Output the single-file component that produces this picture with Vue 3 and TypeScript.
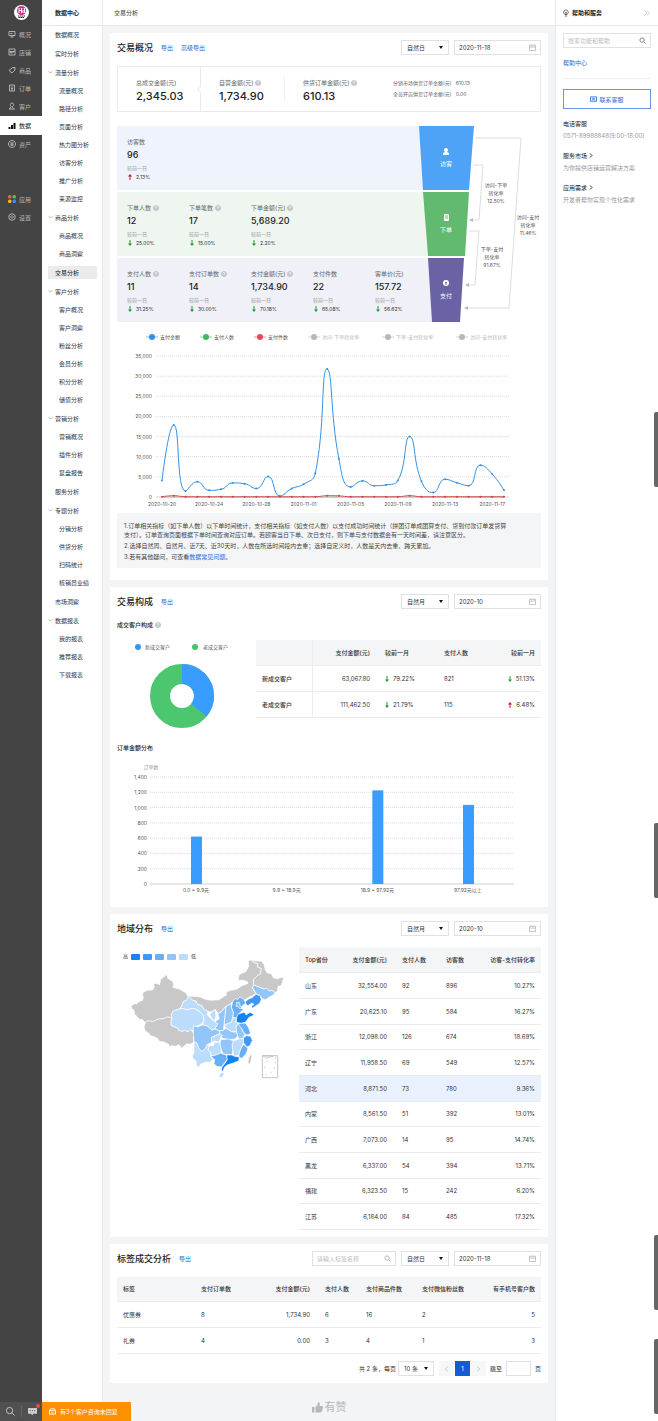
<script setup lang="ts">
import { ref } from 'vue'

interface RailItem { label: string; icon: string; active?: boolean }
interface MenuItem { label: string; kind: 'plain' | 'group' | 'child'; active?: boolean }
interface Metric { label: string; value: string; change: string; up?: boolean; help?: boolean }
interface Point { x: number; y: number }

const rail: RailItem[] = [
  { label: '概况', icon: 'M2 3h12v8H2z M8 11v3 M5 14h6 M5 7h4' },
  { label: '店铺', icon: 'M2 2h12v12H2z M2 7h12 M5 7v3h3V7 M10 7v3' },
  { label: '商品', icon: 'M2 9l7-6h5v5l-6 6z M11 5v1' },
  { label: '订单', icon: 'M3 2h10v12H3z M6 6h4 M6 9h4 M6 12h4' },
  { label: '客户', icon: 'M8 2c4 0 4 6 1 7v2l4 3H2l4-3V9C4 7 4 2 8 2z' },
  { label: '数据', icon: 'M3 10v4 M8 6v8 M13 2v12', active: true },
  { label: '资产', icon: 'M8 1a7 7 0 1 0 .1 0z M5 4l3 3 3-3 M8 7v5 M5 8h6 M5 10h6' },
]

const menu: MenuItem[] = [
  { label: '数据概况', kind: 'plain' },
  { label: '实时分析', kind: 'plain' },
  { label: '流量分析', kind: 'group' },
  { label: '流量概况', kind: 'child' },
  { label: '路径分析', kind: 'child' },
  { label: '页面分析', kind: 'child' },
  { label: '热力图分析', kind: 'child' },
  { label: '访客分析', kind: 'child' },
  { label: '推广分析', kind: 'child' },
  { label: '来源监控', kind: 'child' },
  { label: '商品分析', kind: 'group' },
  { label: '商品概况', kind: 'child' },
  { label: '商品洞察', kind: 'child' },
  { label: '交易分析', kind: 'plain', active: true },
  { label: '客户分析', kind: 'group' },
  { label: '客户概况', kind: 'child' },
  { label: '客户洞察', kind: 'child' },
  { label: '粉丝分析', kind: 'child' },
  { label: '会员分析', kind: 'child' },
  { label: '积分分析', kind: 'child' },
  { label: '储值分析', kind: 'child' },
  { label: '营销分析', kind: 'group' },
  { label: '营销概况', kind: 'child' },
  { label: '插件分析', kind: 'child' },
  { label: '复盘报告', kind: 'child' },
  { label: '服务分析', kind: 'plain' },
  { label: '专题分析', kind: 'group' },
  { label: '分销分析', kind: 'child' },
  { label: '供货分析', kind: 'child' },
  { label: '扫码统计', kind: 'child' },
  { label: '核销员业绩', kind: 'child' },
  { label: '市场洞察', kind: 'plain' },
  { label: '数据报表', kind: 'group' },
  { label: '我的报表', kind: 'child' },
  { label: '推荐报表', kind: 'child' },
  { label: '下载报表', kind: 'child' },
]

const stages: { name: string; metrics: Metric[] }[] = [
  { name: 'visit', metrics: [{ label: '访客数', value: '96', change: '2.13%', up: true }] },
  {
    name: 'order',
    metrics: [
      { label: '下单人数', value: '12', change: '25.00%', help: true },
      { label: '下单笔数', value: '17', change: '15.00%', help: true },
      { label: '下单金额(元)', value: '5,689.20', change: '2.20%', help: true },
    ],
  },
  {
    name: 'pay',
    metrics: [
      { label: '支付人数', value: '11', change: '31.25%', help: true },
      { label: '支付订单数', value: '14', change: '30.00%', help: true },
      { label: '支付金额(元)', value: '1,734.90', change: '70.18%', help: true },
      { label: '支付件数', value: '22', change: '65.08%' },
      { label: '客单价(元)', value: '157.72', change: '56.62%' },
    ],
  },
]

const legend = [
  { label: '支付金额', x: 35, color: '#2f8fe8' },
  { label: '支付人数', x: 89, color: '#3fba63' },
  { label: '支付件数', x: 143, color: '#e8475c' },
  { label: '访问-下单转化率', x: 197, color: '#b8b8b8', off: true },
  { label: '下单-支付转化率', x: 271, color: '#b8b8b8', off: true },
  { label: '访问-支付转化率', x: 345, color: '#b8b8b8', off: true },
]

const amounts = [
  4100, 17900, 1500, 3800, 1650, 1900, 3500, 3300, 2100, 5100, 250, 2100, 3150, 5900, 31800,
  9500, 2500, 4000, 2800, 3000, 4100, 15000, 3900, 1100, 4400, 3550, 2800, 7900, 5700, 1650,
]
const counts = amounts.map((a) => (a > 12000 ? 330 : a > 9000 ? 280 : 60))
const toPoints = (values: number[]): Point[] =>
  values.map((v, i) => ({ x: 45 + (i * 342) / 29, y: 175 - (v * 141) / 35000 }))

const between = (v: number, a: number, b: number) => Math.max(Math.min(a, b), Math.min(Math.max(a, b), v))

function smoothPath(p: Point[]): string {
  let d = `M${p[0].x},${p[0].y}`
  let out: Point = p[0]
  for (let i = 1; i < p.length; i++) {
    const prev = p[i - 1]
    const cur = p[i]
    const next = p[i + 1]
    let back: Point = cur
    let forward: Point = cur
    if (next) {
      const vx = next.x - prev.x
      const vy = next.y - prev.y
      const lp = Math.hypot(cur.x - prev.x, cur.y - prev.y)
      const ln = Math.hypot(cur.x - next.x, cur.y - next.y)
      const r = ln / (ln + lp)
      const fx = between(cur.x + vx * 0.5 * r, cur.x, next.x)
      const fy = between(cur.y + vy * 0.5 * r, cur.y, next.y)
      const bx = between(cur.x - ((fx - cur.x) * lp) / ln, prev.x, cur.x)
      const by = between(cur.y - ((fy - cur.y) * lp) / ln, prev.y, cur.y)
      back = { x: bx, y: by }
      forward = { x: cur.x + ((cur.x - bx) * ln) / lp, y: cur.y + ((cur.y - by) * ln) / lp }
    }
    d += `C${out.x},${out.y} ${back.x},${back.y} ${cur.x},${cur.y}`
    out = forward
  }
  return d
}

const amountPoints = toPoints(amounts)
const countPoints = toPoints(counts)
const amountPath = smoothPath(amountPoints)
const countPath = smoothPath(countPoints)
const yTicks = [35000, 30000, 25000, 20000, 15000, 10000, 5000, 0]
const dates = ['2020-10-20', '2020-10-24', '2020-10-28', '2020-11-01', '2020-11-05', '2020-11-09', '2020-11-13', '2020-11-17']

const bars = [
  { label: '0.0 ~ 9.9元', value: 620 },
  { label: '9.9 ~ 18.9元', value: 0 },
  { label: '18.9 ~ 97.92元', value: 1225 },
  { label: '97.92元以上', value: 1035 },
]
const barTicks = [1400, 1200, 1000, 800, 600, 400, 200, 0]

const regions = [
  ['山东', '32,554.00', '92', '896', '10.27%'],
  ['广东', '20,625.10', '95', '584', '16.27%'],
  ['浙江', '12,098.00', '126', '674', '18.69%'],
  ['辽宁', '11,958.50', '69', '549', '12.57%'],
  ['河北', '8,871.50', '73', '780', '9.36%'],
  ['内蒙', '8,561.50', '51', '392', '13.01%'],
  ['广西', '7,073.00', '14', '95', '14.74%'],
  ['黑龙', '6,337.00', '54', '394', '13.71%'],
  ['福建', '6,323.50', '15', '242', '6.20%'],
  ['江苏', '6,184.00', '84', '485', '17.32%'],
]

const tags = [
  ['优惠券', '8', '1,734.90', '6', '16', '2', '5'],
  ['礼券', '4', '0.00', '3', '4', '1', '3'],
]

const scale = ['#1583f2', '#3f98f5', '#69aff8', '#92c5fa', '#bcdcfc']
const gray = '#c8c8c8'
const provinces: { name: string; fill: string; d: string }[] = [
  { name: 'xinjiang', fill: gray, d: 'M34,196L44,190L50,191L56,184L68,180L70,170L67,164L70,156L82,150L98,149L103,140L100,131L108,129L119,133L122,116L132,110L137,103L142,107L143,114L157,122L162,134L158,141L180,147L198,158L205,170L200,180L190,184L186,196L178,206L160,212L154,222L156,232L142,230L130,235L112,237L100,243L82,242L76,247L68,238L58,237L52,230L44,222L42,210L34,204Z' },
  { name: 'xizang', fill: gray, d: 'M76,247L82,242L100,243L112,237L130,235L142,230L156,232L153,244L154,256L172,262L176,270L186,273L194,270L205,274L212,268L222,280L220,294L222,306L210,312L200,310L194,316L184,324L180,316L174,313L168,318L152,316L148,322L146,312L130,304L120,304L110,292L92,286L88,280L76,272L72,262Z' },
  { name: 'neimenggu', fill: gray, d: 'M205,170L212,167L240,170L256,177L272,180L298,178L312,168L320,164L318,156L332,150L350,147L366,136L384,129L382,124L370,120L354,120L357,104L366,98L378,94L386,78L385,62L394,58L400,66L414,70L412,80L424,84L422,100L412,106L400,118L402,134L396,142L408,160L396,166L384,172L372,180L360,174L350,178L338,184L330,192L318,198L306,212L296,220L286,208L276,214L262,214L252,208L246,196L232,192L228,182L218,180Z' },
  { name: 'heilongjiang', fill: gray, d: 'M394,58L404,62L414,62L424,63L432,72L436,90L442,98L454,100L460,112L472,116L480,112L491,111L487,126L484,136L474,138L472,152L466,158L456,150L448,152L440,144L430,146L412,138L402,134L400,118L412,106L422,100L424,84L412,80L414,70L400,66Z' },
  { name: 'gansu', fill: scale[4], d: 'M205,170L208,168L218,180L228,182L232,192L246,196L252,208L264,212L262,224L272,234L284,244L294,250L286,264L276,270L268,262L260,256L248,254L252,240L250,226L240,214L222,204L200,208L186,204L178,206L186,196L190,184L200,180Z' },
  { name: 'qinghai', fill: scale[4], d: 'M160,212L178,206L186,204L200,208L222,204L240,214L250,226L252,240L244,252L232,256L222,262L218,272L212,268L205,274L194,270L186,273L176,270L172,262L154,256L153,244L156,232L154,222Z' },
  { name: 'ningxia', fill: scale[4], d: 'M276,214L286,208L288,226L284,242L274,232L270,222Z' },
  { name: 'jilin', fill: scale[3], d: 'M402,134L412,138L430,146L440,144L448,152L456,150L466,158L456,166L448,170L436,178L428,176L420,166L408,160L398,142Z' },
  { name: 'liaoning', fill: scale[1], d: 'M376,184L386,176L396,172L408,162L420,166L424,178L418,190L408,196L398,204L394,198L402,192L396,188L384,196L378,192Z' },
  { name: 'hebei', fill: scale[2], d: 'M338,184L346,174L352,178L360,170L370,176L378,188L370,194L362,202L370,208L358,218L352,232L338,232L340,216L334,202Z' },
  { name: 'beijing', fill: scale[3], d: 'M350,186L358,186L360,196L366,200L360,206L354,198L348,198Z' },
  { name: 'shandong', fill: scale[0], d: 'M348,236L354,222L364,218L374,216L378,224L390,216L402,222L396,228L388,230L376,246L364,249L350,246Z' },
  { name: 'shanxi', fill: scale[3], d: 'M318,198L334,190L334,202L340,216L338,232L334,246L312,254L314,232Z' },
  { name: 'shaanxi', fill: scale[3], d: 'M294,222L306,212L318,198L314,232L312,254L310,270L298,272L284,266L294,250L284,244L298,236Z' },
  { name: 'henan', fill: scale[4], d: 'M312,254L334,246L338,232L350,234L346,244L354,250L348,260L352,274L334,274L318,264Z' },
  { name: 'sichuan', fill: scale[3], d: 'M220,256L232,260L248,254L260,256L268,262L276,270L284,266L298,272L300,280L286,286L274,292L276,306L262,312L256,324L246,334L236,324L230,308L222,304L220,280Z' },
  { name: 'chongqing', fill: scale[4], d: 'M286,286L300,280L308,286L300,294L298,306L284,302L276,306L274,292Z' },
  { name: 'hubei', fill: scale[3], d: 'M298,272L310,270L318,264L334,274L350,276L354,288L344,296L326,298L310,294L302,290L308,286L300,280Z' },
  { name: 'anhui', fill: scale[3], d: 'M354,250L364,258L366,268L374,282L370,292L358,296L354,288L350,276L348,260Z' },
  { name: 'jiangsu', fill: scale[2], d: 'M354,250L364,249L376,248L386,262L392,280L380,284L372,278L366,266Z' },
  { name: 'zhejiang', fill: scale[1], d: 'M370,292L380,286L392,288L397,300L390,316L380,320L370,306Z' },
  { name: 'fujian', fill: scale[2], d: 'M370,312L380,320L384,326L378,340L366,354L358,352L356,340L362,326Z' },
  { name: 'jiangxi', fill: scale[4], d: 'M340,302L356,296L370,294L370,310L362,326L356,344L342,348L338,330L336,314Z' },
  { name: 'hunan', fill: scale[3], d: 'M302,298L326,296L340,302L336,314L338,330L336,344L322,342L310,342L304,328L300,314Z' },
  { name: 'guizhou', fill: scale[4], d: 'M268,316L280,316L284,306L298,306L300,314L304,328L302,338L288,344L274,346L272,336L264,328Z' },
  { name: 'yunnan', fill: scale[4], d: 'M222,306L230,308L236,324L246,334L256,324L262,314L268,316L264,328L272,336L272,350L280,356L270,366L256,366L244,370L236,380L230,378L228,362L216,350L222,336Z' },
  { name: 'guangxi', fill: scale[2], d: 'M272,348L288,344L302,338L310,342L320,344L322,356L312,370L304,380L290,378L282,370L284,358Z' },
  { name: 'guangdong', fill: scale[0], d: 'M320,344L336,344L344,348L358,350L356,362L340,368L322,374L314,380L308,394L304,390L306,380L314,370L322,358Z' },
  { name: 'hainan', fill: scale[4], d: 'M297,404L306,396L313,398L308,410L300,413Z' },
  { name: 'taiwan', fill: gray, d: 'M392,343L396,346L393,362L388,374L384,366L386,352Z' },
]

const helpIcon = 'M4 0a4 4 0 1 0 .01 0z'
const thumbs = ['one', 'two', 'three', 'four']
const periodDay = ref('自然日')
const periodMonth = ref('自然月')
const periodRegion = ref('自然月')
const periodTag = ref('自然日')
const pageSize = ref('10 条')
const fmt = (n: number) => n.toLocaleString('en-US')
</script>

<template>
  <div class="page">
    <nav class="rail" aria-label="主导航">
      <div class="logo">
        <svg viewBox="0 0 30 30" aria-hidden="true">
          <circle cx="15" cy="15" r="15" fill="#fff" />
          <circle cx="15" cy="11" r="9" fill="#d8288c" />
          <path d="M10 6v10M10 11h5M15 6v10M18 10v6M18 6v1M21 6v10" stroke="#fff" stroke-width="2" fill="none" />
          <path d="M8 22h14M9 25h12" stroke="#222" stroke-width="2" stroke-dasharray="3 1" />
        </svg>
      </div>
      <a v-for="item in rail" :key="item.label" href="#" class="rail-item" :class="{ active: item.active }">
        <svg viewBox="0 0 16 16" aria-hidden="true"><path :d="item.icon" /></svg>
        <span>{{ item.label }}</span>
      </a>
      <a href="#" class="rail-item apps">
        <svg viewBox="0 0 16 16" aria-hidden="true">
          <rect x="0" y="0" width="7" height="7" rx="3" fill="#f05b4f" />
          <rect x="9" y="0" width="7" height="7" rx="3" fill="#4fc15b" />
          <rect x="0" y="9" width="7" height="7" rx="3" fill="#f7b52c" />
          <rect x="9" y="9" width="7" height="7" rx="3" fill="#3f8ef5" />
        </svg>
        <span>应用</span>
      </a>
      <a href="#" class="rail-item">
        <svg viewBox="0 0 16 16" aria-hidden="true"><path d="M8 1l6 3.500v7L8 15l-6-3.500v-7z M8 5.500a2.500 2.500 0 1 0 .1 0z" /></svg>
        <span>设置</span>
      </a>
      <div class="rail-foot">
        <button type="button" aria-label="搜索">
          <svg viewBox="0 0 20 20"><circle cx="8" cy="8" r="7" /><path d="M13 13l6 6" /></svg>
        </button>
        <button type="button" class="chat" aria-label="消息">
          <svg viewBox="0 0 20 20">
            <path class="solid" d="M0 2h20v13h-8l-3 4-2-4H0z" />
            <path class="dots" d="M4 8h2M9 8h2M14 8h2" />
          </svg>
        </button>
      </div>
    </nav>

    <aside class="submenu">
      <h1 class="bar strong">数据中心</h1>
      <ul>
        <li v-for="item in menu" :key="item.label" :class="[item.kind, { active: item.active }]">
          <a href="#">
            <svg v-if="item.kind === 'group'" viewBox="0 0 8 8" aria-hidden="true"><path d="M1 2l3 3 3-3" /></svg>
            <span>{{ item.label }}</span>
          </a>
        </li>
      </ul>
    </aside>

    <main>
      <div class="bar crumb">交易分析</div>
      <div class="cards">
        <section class="card overview">
          <header>
            <h2>交易概况</h2>
            <a href="#">导出</a>
            <a href="#">高级导出</a>
            <div class="controls">
              <span class="select"><select v-model="periodDay" aria-label="周期"><option>自然日</option><option>自然月</option></select></span>
              <label class="field date"><input type="text" value="2020-11-18" aria-label="日期" /><svg viewBox="0 0 16 16"><path d="M1 3h14v12H1zM1 7h14M4 1v2M12 1v2" /></svg></label>
            </div>
          </header>

          <div class="summary">
            <div class="total"><p>总成交金额(元)</p><strong>2,345.03</strong></div>
            <div class="part self">
              <p>自营金额(元)<svg class="help" viewBox="0 0 8 8"><path :d="helpIcon" /><path class="q" d="M3 3c0-2 2-1 2 0L4 4.500M4 6v.4" /></svg></p>
              <strong>1,734.90</strong>
            </div>
            <div class="part supply">
              <p>供货订单金额(元)<svg class="help" viewBox="0 0 8 8"><path :d="helpIcon" /><path class="q" d="M3 3c0-2 2-1 2 0L4 4.500M4 6v.4" /></svg></p>
              <strong>610.13</strong>
            </div>
            <div class="detail">
              <p>分销市场供货订单金额(元)<span>610.13</span></p>
              <p>全员开店供货订单金额(元)<span>0.00</span></p>
            </div>
          </div>

          <div class="funnel">
            <div class="stages">
              <div v-for="s in stages" :key="s.name" class="stage" :class="s.name">
                <div v-for="m in s.metrics" :key="m.label" class="metric">
                  <p class="name">{{ m.label }}<svg v-if="m.help" class="help" viewBox="0 0 8 8"><path :d="helpIcon" /><path class="q" d="M3 3c0-2 2-1 2 0L4 4.500M4 6v.4" /></svg></p>
                  <strong>{{ m.value }}</strong>
                  <p class="vs">较前一日</p>
                  <p class="change">
                    <svg class="arrow" :class="{ up: m.up }" viewBox="0 0 8 12"><path d="M4 12L0 7h3V0h2v7h3z" /></svg>{{ m.change }}
                  </p>
                </div>
              </div>
            </div>
            <svg class="shape" viewBox="0 0 123 196" role="img" aria-label="转化漏斗">
              <polygon points="0,0 2,0 6,64 0,64" fill="#eff4fc" />
              <polygon points="0,66 6,66 11,130 0,130" fill="#eef6ef" />
              <polygon points="0,132 11,132 15,196 0,196" fill="#eff0f8" />
              <polygon points="1,0 56,0 51,64 5,64" fill="#4fa3f7" />
              <polygon points="5,66 51,66 47,130 10,130" fill="#62ba70" />
              <polygon points="10,132 46,132 42,196 14,196" fill="#6963a5" />
              <g fill="#fff">
                <circle cx="28" cy="24" r="2" /><path d="M27 25h2v1l2 1v2h-6v-2l2-1z" />
                <rect x="26" y="88" width="5" height="7" rx="1" />
                <circle cx="28" cy="157" r="3" />
              </g>
              <path d="M27 90h3M27 92h3" stroke="#62ba70" fill="none" />
              <path d="M27 156l1 1 1-1M28 157v2" stroke="#6963a5" fill="none" />
              <g class="tier"><text x="28" y="40">访客</text><text x="28" y="106">下单</text><text x="28" y="172">支付</text></g>
              <g fill="none" stroke="#ddd">
                <path d="M57 12h46l-12 170H48" /><path d="M55 39h10l-4 55H53" /><path d="M51 105h10l-4 54H49" />
              </g>
              <path d="M46 182l4-2v4zM51 94l4-2v4zM47 159l4-2v4z" fill="#bbb" />
              <g class="rate">
                <text x="78" y="61">访问-下单</text><text x="78" y="69">转化率</text><text x="78" y="77">12.50%</text>
                <text x="110" y="93">访问-支付</text><text x="110" y="101">转化率</text><text x="110" y="109">11.46%</text>
                <text x="74" y="125">下单-支付</text><text x="74" y="133">转化率</text><text x="74" y="141">91.67%</text>
              </g>
            </svg>
          </div>

          <svg class="chart" viewBox="0 0 424 191" role="img" aria-label="支付趋势">
            <g v-for="l in legend" :key="l.label">
              <path :d="`M${l.x - 6} 15h12`" :stroke="l.color" stroke-opacity=".6" />
              <circle :cx="l.x" cy="15" r="3" :fill="l.color" />
              <text :x="l.x + 8" y="17" :class="{ off: l.off }">{{ l.label }}</text>
            </g>
            <g v-for="(t, i) in yTicks" :key="t">
              <line x1="39" x2="392" :y1="34 + (i * 141) / 7" :y2="34 + (i * 141) / 7" :class="t ? 'grid' : 'base'" />
              <text class="end" x="35" :y="36 + (i * 141) / 7">{{ fmt(t) }}</text>
            </g>
            <text v-for="(d, i) in dates" :key="d" class="mid" :x="45 + (i * 342 * 4) / 29" y="184">{{ d }}</text>
            <path :d="amountPath" class="line" stroke="#3391e6" />
            <circle v-for="(p, i) in amountPoints" :key="i" :cx="p.x" :cy="p.y" r="1" fill="#3391e6" />
            <path d="M45 175H387" stroke="#8bc79a" />
            <path :d="countPath" class="line" stroke="#dc4c5c" />
            <circle v-for="(p, i) in countPoints" :key="i" :cx="p.x" :cy="p.y" r="1" fill="#d33d50" />
          </svg>

          <div class="notes">
            <p>1.订单相关指标（如下单人数）以下单时间统计，支付相关指标（如支付人数）以支付成功时间统计（拼团订单成团算支付、货到付款订单发货算<br />支付）。订单查询页面根据下单时间查询对应订单。若顾客当日下单、次日支付，则下单与支付数据会有一天时间差，请注意区分。</p>
            <p>2.选择自然周、自然月、近7天、近30天时，人数在所选时间段内去重；选择自定义时，人数是天内去重、跨天累加。</p>
            <p>3.若有其他疑问，可查看<a href="#">数据常见问题</a>。</p>
          </div>
        </section>

        <section class="card compose">
          <header>
            <h2>交易构成</h2>
            <a href="#">导出</a>
            <div class="controls">
              <span class="select"><select v-model="periodMonth" aria-label="周期"><option>自然日</option><option>自然月</option></select></span>
              <label class="field date"><input type="text" value="2020-10" aria-label="月份" /><svg viewBox="0 0 16 16"><path d="M1 3h14v12H1zM1 7h14M4 1v2M12 1v2" /></svg></label>
            </div>
          </header>
          <h3>成交客户构成<svg class="help" viewBox="0 0 8 8"><path :d="helpIcon" /><path class="q" d="M3 3c0-2 2-1 2 0L4 4.500M4 6v.4" /></svg></h3>
          <div class="split">
            <svg class="donut" viewBox="0 0 139 98" role="img" aria-label="新老客户占比">
              <circle cx="21" cy="7" r="3" fill="#3496fa" /><text x="28" y="9">新成交客户</text>
              <circle cx="78" cy="7" r="3" fill="#45c468" /><text x="86" y="9">老成交客户</text>
              <circle cx="65" cy="56" r="22" fill="none" stroke="#4cc76f" stroke-width="20" />
              <circle cx="65" cy="56" r="22" fill="none" stroke="#389dff" stroke-width="20" pathLength="1000" stroke-dasharray="361 639" transform="rotate(-90 65 56)" />
            </svg>
            <table class="compare">
              <colgroup><col class="c1" /><col class="c2" /><col class="c3" /><col class="c4" /><col /></colgroup>
              <thead><tr><th></th><th class="num">支付金额(元)</th><th class="shift">较前一月</th><th>支付人数</th><th class="num">较前一月</th></tr></thead>
              <tbody>
                <tr>
                  <th scope="row">新成交客户</th><td class="num">63,067.80</td>
                  <td class="shift"><svg class="arrow" viewBox="0 0 8 12"><path d="M4 12L0 7h3V0h2v7h3z" /></svg>79.22%</td><td>821</td>
                  <td class="num"><svg class="arrow" viewBox="0 0 8 12"><path d="M4 12L0 7h3V0h2v7h3z" /></svg>51.13%</td>
                </tr>
                <tr>
                  <th scope="row">老成交客户</th><td class="num">111,462.50</td>
                  <td class="shift"><svg class="arrow" viewBox="0 0 8 12"><path d="M4 12L0 7h3V0h2v7h3z" /></svg>21.79%</td><td>115</td>
                  <td class="num"><svg class="arrow up" viewBox="0 0 8 12"><path d="M4 12L0 7h3V0h2v7h3z" /></svg>6.48%</td>
                </tr>
              </tbody>
            </table>
          </div>
          <h3 class="second">订单金额分布</h3>
          <svg class="chart" viewBox="0 0 424 148" role="img" aria-label="订单金额分布">
            <text class="mid soft" x="34" y="18">订单数</text>
            <g v-for="(t, i) in barTicks" :key="t">
              <line x1="33" x2="397" :y1="26 + (i * 107) / 7" :y2="26 + (i * 107) / 7" :class="t ? 'grid' : 'base'" />
              <text class="end" x="30" :y="28 + (i * 107) / 7">{{ fmt(t) }}</text>
            </g>
            <g v-for="(b, i) in bars" :key="b.label">
              <rect :x="74 + (i * 272) / 3" :y="133 - (b.value * 107) / 1400" width="11" :height="(b.value * 107) / 1400" fill="#389dff" />
              <text class="mid" :x="79 + (i * 272) / 3" y="141">{{ b.label }}</text>
            </g>
          </svg>
        </section>

        <section class="card region">
          <header>
            <h2>地域分布</h2>
            <a href="#">导出</a>
            <div class="controls">
              <span class="select"><select v-model="periodRegion" aria-label="周期"><option>自然日</option><option>自然月</option></select></span>
              <label class="field date"><input type="text" value="2020-10" aria-label="月份" /><svg viewBox="0 0 16 16"><path d="M1 3h14v12H1zM1 7h14M4 1v2M12 1v2" /></svg></label>
            </div>
          </header>
          <div class="split">
            <div class="geo">
              <div class="heat"><span>高</span><i v-for="(c, i) in scale" :key="c" :class="'s' + i"></i><span>低</span></div>
              <svg class="map" viewBox="0 50 540 370" role="img" aria-label="地域分布图">
                <path v-for="p in provinces" :key="p.name" :d="p.d" :fill="p.fill" />
                <path class="inset" d="M427 346h46v66h-46z" />
                <path class="isle" d="M430 347l8 7 10-3 12-3zM466 350v6M466 364v6M464 380l-2 6M456 394l-5 5M442 402l-5 2M434 384v-5M440 366l2-5" />
              </svg>
            </div>
            <table class="top">
              <colgroup><col class="c1" /><col class="c2" /><col class="c3" /><col class="c4" /><col /></colgroup>
              <thead><tr><th>Top省份</th><th class="num">支付金额(元)</th><th class="shift">支付人数</th><th>访客数</th><th class="num">访客-支付转化率</th></tr></thead>
              <tbody>
                <tr v-for="(r, i) in regions" :key="r[0]" :class="{ hover: i === 4 }">
                  <td>{{ r[0] }}</td><td class="num">{{ r[1] }}</td><td class="shift">{{ r[2] }}</td><td>{{ r[3] }}</td><td class="num">{{ r[4] }}</td>
                </tr>
              </tbody>
            </table>
          </div>
        </section>

        <section class="card tagcard">
          <header>
            <h2>标签成交分析</h2>
            <a href="#">导出</a>
            <div class="controls">
              <label class="field search"><input type="text" placeholder="请输入标签名称" aria-label="标签名称" /><svg viewBox="0 0 16 16"><circle cx="7" cy="7" r="5" /><path d="M11 11l4 4" /></svg></label>
              <span class="select"><select v-model="periodTag" aria-label="周期"><option>自然日</option><option>自然月</option></select></span>
              <label class="field date"><input type="text" value="2020-11-18" aria-label="日期" /><svg viewBox="0 0 16 16"><path d="M1 3h14v12H1zM1 7h14M4 1v2M12 1v2" /></svg></label>
            </div>
          </header>
          <table class="tags">
            <colgroup><col class="c1" /><col class="c2" /><col class="c3" /><col class="c4" /><col class="c5" /><col class="c6" /></colgroup>
            <thead><tr><th>标签</th><th>支付订单数</th><th class="num">支付金额(元)</th><th class="shift">支付人数</th><th>支付商品件数</th><th>支付微信粉丝数</th><th class="num">有手机号客户数</th></tr></thead>
            <tbody>
              <tr v-for="t in tags" :key="t[0]">
                <td>{{ t[0] }}</td><td>{{ t[1] }}</td><td class="num">{{ t[2] }}</td><td class="shift">{{ t[3] }}</td><td>{{ t[4] }}</td><td>{{ t[5] }}</td><td class="num">{{ t[6] }}</td>
              </tr>
            </tbody>
          </table>
          <div class="pager">
            <span>共 2 条，每页</span>
            <span class="select small"><select v-model="pageSize" aria-label="每页条数"><option>10 条</option><option>20 条</option></select></span>
            <div class="pages">
              <button type="button" aria-label="上一页"><svg viewBox="0 0 8 8"><path d="M6 0L2 4l4 4" /></svg></button>
              <button type="button" class="current">1</button>
              <button type="button" aria-label="下一页"><svg viewBox="0 0 8 8"><path d="M2 0l4 4-4 4" /></svg></button>
            </div>
            <label>跳至<input type="text" aria-label="页码" />页</label>
          </div>
        </section>
      </div>
      <footer>
        <svg viewBox="0 0 22 22" aria-hidden="true"><path d="M0 10h5v11H0zM7 10l4-4 1-6c4 0 4 4 3 8h6c2 5-1 10-3 13H7z" /></svg>
        <span>有赞</span>
      </footer>
    </main>

    <aside class="support">
      <div class="bar">
        <svg viewBox="0 0 16 20" aria-hidden="true"><path d="M5 14C0 9 2 2 8 2s8 7 3 12zM5 18h6M8 14V8M6 7l2 2 2-2" /></svg>
        <strong>帮助和服务</strong>
        <button type="button" aria-label="收起"><svg viewBox="0 0 12 12"><path d="M1 1l5 5-5 5M6 1l5 5-5 5" /></svg></button>
      </div>
      <div class="support-body">
        <label class="field lookup"><input type="text" placeholder="搜索功能和帮助" aria-label="搜索功能和帮助" /><svg viewBox="0 0 16 16"><circle cx="7" cy="7" r="5" /><path d="M11 11l4 4" /></svg></label>
        <a class="center" href="#">帮助中心</a>
        <button type="button" class="contact"><svg viewBox="0 0 16 16"><path d="M1 2h14v10h-5l-2 2-2-2H1zM5 6h6M5 9h6" /></svg>联系客服</button>
        <dl>
          <dt>电话客服</dt><dd>0571-89988848(9:00-18:00)</dd>
          <dt>服务市场<svg viewBox="0 0 8 8"><path d="M2 0l4 4-4 4" /></svg></dt><dd>为你提供店铺运营解决方案</dd>
          <dt>应用需求<svg viewBox="0 0 8 8"><path d="M2 0l4 4-4 4" /></svg></dt><dd>开发者帮你实现个性化需求</dd>
        </dl>
      </div>
    </aside>

    <a href="#" class="toast">
      <svg viewBox="0 0 16 16" aria-hidden="true"><path d="M3 2h10l2 4v8H1V6zM1 6h14M5 10c2 2 4 2 6 0" /></svg>
      <span>有3个客户咨询未回复</span>
    </a>
    <i v-for="t in thumbs" :key="t" class="thumb" :class="t"></i>
  </div>
</template>

<style>
body { margin: 0; background: #f2f4f6; }
</style>

<style scoped>
.page {
  position: relative;
  display: grid;
  grid-template-columns: 42px 61px 1fr 103px;
  min-height: 100vh;
  font: 6px/9px Inter, "Noto Sans CJK SC", sans-serif;
  color: #333;
  overflow: hidden;
}
.page * { box-sizing: border-box; }
h1, h2, h3, p, ul, dl, dd { margin: 0; padding: 0; font-weight: 400; font-size: inherit; }
ul { list-style: none; }
a { color: #2d68d2; text-decoration: none; }
button, input, select { font: inherit; color: inherit; margin: 0; padding: 0; border: 0; background: none; border-radius: 0; outline: 0; }
svg { display: block; flex: none; fill: none; stroke-width: 1; }
svg text { fill: #555; stroke: none; font-size: 5px; }

.bar { height: 26px; display: flex; align-items: center; border-bottom: 1px solid #e6e8ea; background: #fff; }
.bar.strong { font-weight: 600; padding-left: 13px; color: #222; }

.rail { background: #444; display: flex; flex-direction: column; }
.logo { height: 25px; display: flex; justify-content: center; align-items: center; }
.logo svg { width: 15px; height: 15px; }
.rail-item { height: 18px; display: flex; align-items: center; gap: 3px; padding-left: 8px; color: #b8b8b8; }
.rail-item svg { width: 8px; height: 8px; }
.rail-item path { stroke: #b0b0b0; stroke-width: 2; }
.rail-item.active { height: 19px; background: #fff; color: #222; margin-top: 1px; }
.rail-item.active path { stroke: #111; stroke-width: 4; }
.rail-item.apps { margin-top: 37px; }
.rail-foot { margin-top: auto; height: 19px; background: #505050; display: flex; align-items: center; }
.rail-foot button { width: 21px; height: 11px; display: flex; justify-content: center; align-items: center; }
.rail-foot button.chat { border-left: 1px solid #666; position: relative; }
.rail-foot svg { width: 9px; height: 9px; stroke: #ccc; stroke-width: 2; }
.rail-foot .solid { fill: #ccc; stroke: none; }
.rail-foot .dots { stroke: #555; }
.chat::after { content: ""; position: absolute; right: 2px; top: -2px; width: 4px; height: 4px; border-radius: 2px; background: #ea4b46; }

.submenu { background: #fff; border-right: 1px solid #e9ebed; }
.submenu li { height: 18px; padding: 2px 5px 3px 6px; }
.submenu li.plain, .submenu li.group { margin-top: 1px; }
.submenu li:first-child { margin-top: 0; }
.submenu a { display: flex; align-items: center; height: 13px; padding-left: 7px; color: #333; }
.submenu .child a { padding-left: 11px; }
.submenu .group a { padding-left: 0; gap: 2px; }
.submenu li svg { width: 5px; height: 5px; stroke: #888; }
.submenu .active a { background: #ebebeb; color: #111; }

main { display: flex; flex-direction: column; background: #f2f4f6; min-width: 0; }
.crumb { padding-left: 11px; }
.cards { padding: 7px; display: flex; flex-direction: column; gap: 7px; }
.card { background: #fff; padding: 7px; }
.overview { padding-bottom: 12px; }
.compose { padding-bottom: 8px; }
header { display: flex; align-items: center; height: 15px; gap: 8px; }
header h2 { font-size: 9px; line-height: 13px; font-weight: 500; color: #222; }
.controls { margin-left: auto; display: flex; gap: 5px; }
.select { position: relative; display: block; width: 48px; height: 15px; border: 1px solid #dfe1e4; background: #fff; }
.select::after { content: ""; position: absolute; right: 5px; top: 5px; border: 2px solid transparent; border-top: 3px solid #111; border-bottom: 0; }
.select select { appearance: none; width: 100%; height: 100%; padding-left: 5px; display: block; }
.field { display: flex; align-items: center; height: 15px; border: 1px solid #dfe1e4; background: #fff; padding: 0 4px; }
.field input { flex: 1; min-width: 0; width: 0; height: 11px; }
.field input::placeholder { color: #bbb; opacity: 1; }
.field svg { width: 7px; height: 7px; stroke: #aaa; stroke-width: 2; }
.date { width: 87px; }
.date svg { stroke: #bbb; }
.search { width: 84px; }

.help { display: inline-block; width: 6px; height: 6px; margin-left: 2px; vertical-align: -1px; fill: #c3c5c8; }
.help .q { fill: none; stroke: #fff; }
.arrow { display: inline-block; width: 4px; height: 6px; margin-right: 4px; vertical-align: -1px; fill: #1f9a35; }
.arrow.up { fill: #c8142c; transform: rotate(180deg); }

.summary { margin-top: 11px; height: 46px; border: 1px solid #e8eaec; display: grid; grid-template-columns: 83px 84px 90px 1fr; align-items: center; color: #666; }
.summary strong { display: block; font-size: 11px; line-height: 16px; font-weight: 500; color: #222; margin-top: 1px; }
.total { position: relative; align-self: stretch; padding: 11px 0 0 18px; border-right: 1px solid #e8eaec; }
.total::after { content: ""; position: absolute; right: -3px; top: 20px; width: 4px; height: 4px; border: solid #e8eaec; border-width: 0 0 1px 1px; background: #fff; transform: rotate(45deg); }
.part { position: relative; align-self: stretch; padding: 11px 0 0 18px; }
.self::after { content: ""; position: absolute; right: 0; top: 10px; height: 24px; border-right: 1px solid #eceef0; }
.detail { padding-left: 18px; font-size: 5px; line-height: 11px; }
.detail span { margin-left: 4px; }

.funnel { margin-top: 14px; display: grid; grid-template-columns: 1fr 123px; }
.stages { display: flex; flex-direction: column; gap: 2px; min-width: 0; }
.stage { height: 64px; display: grid; grid-template-columns: repeat(4, 62px) 1fr; padding: 11px 0 0 10px; white-space: nowrap; }
.visit { background: #eff4fc; }
.order { background: #eef6ef; }
.pay { background: #eff0f8; }
.metric { min-width: 0; }
.metric .name { height: 9px; color: #666; }
.metric strong { display: block; font-size: 9px; line-height: 17px; font-weight: 500; color: #222; }
.vs { font-size: 5px; line-height: 9px; color: #999; margin-top: 1px; }
.change { font-size: 5px; line-height: 8px; padding-left: 1px; }
.shape { width: 123px; height: 196px; }
.shape text { text-anchor: middle; }
.shape .tier text { fill: #fff; font-size: 6px; }

.chart { width: 100%; height: auto; }
.chart .grid { stroke: #dcdcdc; stroke-dasharray: 1 1; }
.chart .base { stroke: #ccd0d5; }
.chart .end { text-anchor: end; }
.chart .mid { text-anchor: middle; }
.chart .off { fill: #bbb; }
.chart .soft { fill: #999; }

.notes { background: #f4f5f7; padding: 8px 7px 7px; color: #444; display: flex; flex-direction: column; gap: 2px; }

h3 { margin-top: 11px; font-weight: 500; color: #222; }
.split { display: flex; align-items: flex-start; }
.donut { width: 139px; height: 98px; }
h3 + .split { margin-top: 11px; }
h3.second { margin-top: 5px; }
h3 + .chart { margin-top: -1px; }

table { border-collapse: collapse; table-layout: fixed; width: 100%; white-space: nowrap; }
th, td { text-align: left; padding: 0 6px; font-weight: 400; border-bottom: 1px solid #eaecee; height: 26px; }
thead th { background: #f4f5f7; height: 25px; font-weight: 500; }
tbody th { font-weight: 500; }
.num { text-align: right; }
td.shift, th.shift { padding-left: 9px; }
.compare { flex: 1; }
.compare th:first-child { border-right: 1px solid #eaecee; }
.compare .c1 { width: 56px; }
.compare .c2 { width: 64px; }
.compare .c3 { width: 62px; }
.compare .c4 { width: 45px; }

.region .split { margin-top: 11px; }
.geo { width: 182px; flex: none; padding: 6px 0 0 3px; }
.heat { display: flex; gap: 3px; align-items: center; padding-left: 3px; font-size: 5px; line-height: 7px; }
.heat i { width: 9px; height: 6px; border-radius: 1px; }
.s0 { background: #1583f2; }
.s1 { background: #3f98f5; }
.s2 { background: #69aff8; }
.s3 { background: #92c5fa; }
.s4 { background: #bcdcfc; }
.map { width: 180px; height: auto; margin-top: -3px; }
.map path { stroke: #fff; stroke-width: 2; stroke-linejoin: round; }
.map .inset { stroke: #c4c4c4; stroke-width: 3; }
.map .isle { stroke: #b8b8b8; }
.top { flex: 1; }
.top .c1 { width: 34px; }
.top .c2 { width: 60px; }
.top .c3 { width: 47px; }
.top .c4 { width: 35px; }
.top tbody tr:nth-child(3n) td { height: 25px; }
.top .hover { background: #e9f1fe; }

.tags { margin-top: 11px; }
.tags .c1 { width: 78px; }
.tags .c2 { width: 57px; }
.tags .c3 { width: 64px; }
.tags .c4 { width: 44px; }
.tags .c5 { width: 56px; }
.tags .c6 { width: 60px; }
.pager { display: flex; justify-content: flex-end; align-items: center; margin-top: 7px; }
.select.small { width: 36px; margin: 0 5px 0 2px; }
.pages { display: flex; gap: 1px; margin-right: 4px; }
.pages button { width: 15px; height: 15px; background: #f6f7f8; display: flex; align-items: center; justify-content: center; }
.pages svg { width: 5px; height: 6px; stroke: #aaa; }
.pages .current { background: #155bd4; color: #fff; }
.pager label { display: flex; align-items: center; gap: 4px; }
.pager input { width: 25px; height: 15px; border: 1px solid #dfe1e4; }

footer { display: flex; justify-content: center; align-items: center; gap: 2px; margin-top: 10px; color: #b5b7ba; font-size: 11px; line-height: 15px; }
footer svg { width: 11px; height: 11px; fill: #b5b7ba; }

.support { background: #fff; border-left: 1px solid #e6e8ea; }
.support .bar { padding: 0 8px 0 7px; gap: 3px; color: #222; }
.support .bar strong { font-weight: 600; flex: 1; }
.support .bar svg { width: 6px; height: 8px; stroke: #333; stroke-width: 2; }
.support .bar button svg { width: 6px; height: 6px; stroke: #aaa; stroke-width: 1; }
.support-body { padding: 7px; }
.lookup svg { stroke: #777; }
.center { display: block; padding: 10px 0 11px; border-bottom: 1px solid #eceef0; }
.contact { width: 100%; height: 20px; margin-top: 10px; border: 1px solid #6a95de; color: #2d68d2; display: flex; align-items: center; justify-content: center; gap: 2px; }
.contact svg { width: 7px; height: 7px; stroke: #2d68d2; stroke-width: 2; }
dl { margin-top: 10px; }
dt { display: flex; align-items: center; gap: 2px; color: #222; }
dt svg { width: 4px; height: 5px; stroke: #333; stroke-width: 2; }
dd { color: #999; margin: 3px 0 11px; white-space: nowrap; }

.toast { position: absolute; left: 42px; bottom: 0; width: 89px; height: 19px; background: #ff9100; color: #fff; display: flex; align-items: center; padding-left: 7px; gap: 4px; }
.toast svg { width: 7px; height: 7px; stroke: #fff; stroke-width: 2; }
.thumb { position: absolute; right: 0; width: 4px; height: 75px; background: #666; border-radius: 2px 0 0 2px; }
.one { top: 412px; }
.two { top: 823px; }
.three { top: 1235px; }
.four { top: 1339px; }
</style>
